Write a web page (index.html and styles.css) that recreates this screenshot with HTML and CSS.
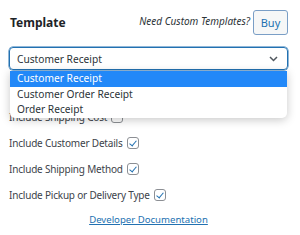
FILE: index.html
```html
<!DOCTYPE html>
<html>
<head>
    <title>Template Settings</title>
    <meta charset="UTF-8">
    <link rel="stylesheet" href="styles.css">
</head>
<body>
    <div class="panel">
        <div class="header">
            <span class="title">Template</span>
            <span class="promo">
                <em>Need Custom Templates?</em>
                <button class="buy-btn">Buy</button>
            </span>
        </div>

        <div class="select-wrap">
            <div class="select">
                <span>Customer Receipt</span>
                <svg class="chevron" width="9" height="6" viewBox="0 0 9 6"><path d="M1 1 L4.5 4.5 L8 1" fill="none" stroke="#50575e" stroke-width="1.5"/></svg>
            </div>
            <ul class="dropdown">
                <li class="selected">Customer Receipt</li>
                <li>Customer Order Receipt</li>
                <li>Order Receipt</li>
            </ul>
        </div>

        <div class="options">
            <label class="option">Include Shipping Cost <span class="check"></span></label>
            <label class="option">Include Customer Details <span class="check on"></span></label>
            <label class="option">Include Shipping Method <span class="check on"></span></label>
            <label class="option">Include Pickup or Delivery Type <span class="check on"></span></label>
        </div>

        <div class="docs"><a href="#">Developer Documentation</a></div>
    </div>
</body>
</html>
```

FILE: styles.css
```css
body { margin: 0; width: 300px; height: 235px; background: #fff; font-family: "Noto Sans", "Open Sans", sans-serif; color: #3c434a; overflow: hidden; }
.panel { padding: 10px 12px 0 9px; }
.header { display: flex; justify-content: space-between; align-items: center; height: 25px; }
.title { font-size: 12px; font-weight: bold; color: #1d2327; padding-left: 1px; margin-top: -1px; }
.promo { display: flex; align-items: center; gap: 3px; }
.promo em { font-size: 10px; color: #2c3338; margin-top: -3px; }
.buy-btn { width: 35px; height: 25px; padding: 0; background: #f6f7f7; border: 1px solid #7a9ec6; border-radius: 3px; color: #2271b1; font-family: inherit; font-size: 11px; }
.select-wrap { position: relative; margin-top: 12px; }
.select { box-sizing: border-box; height: 23px; border: 1px solid #2271b1; border-radius: 4px; display: flex; align-items: center; justify-content: space-between; padding: 0 9px 0 7px; font-size: 10.2px; color: #2c3338; box-shadow: 0 0 0 0.5px #2271b1; }
.chevron { margin-top: 1px; }
.dropdown { position: absolute; z-index: 10; left: 1px; right: 1px; top: 24px; margin: 0; padding: 0; list-style: none; background: #fff; border-radius: 0 0 5px 5px; box-shadow: 0 2px 10px rgba(0,0,0,0.22); font-size: 10.2px; color: #2c3338; overflow: hidden; }
.dropdown li { height: 15.7px; line-height: 15.7px; padding-left: 7px; }
.dropdown li.selected { background: #2288f8; color: #fff; }
.options { display: flex; flex-direction: column; margin-top: 34px; }
.option { display: flex; align-items: center; gap: 4px; height: 26px; font-size: 10px; letter-spacing: -0.2px; color: #3c434a; }
.check { box-sizing: border-box; width: 12px; height: 12px; border: 1px solid #8c8f94; border-radius: 3px; background: #fff; position: relative; }
.check.on::after { content: ""; position: absolute; left: 3px; top: 0.5px; width: 3px; height: 6px; border: solid #2271b1; border-width: 0 1.7px 1.7px 0; transform: rotate(40deg); }
.docs { text-align: center; margin-top: 5px; font-size: 9.6px; }
.docs a { color: #2271b1; }
```
